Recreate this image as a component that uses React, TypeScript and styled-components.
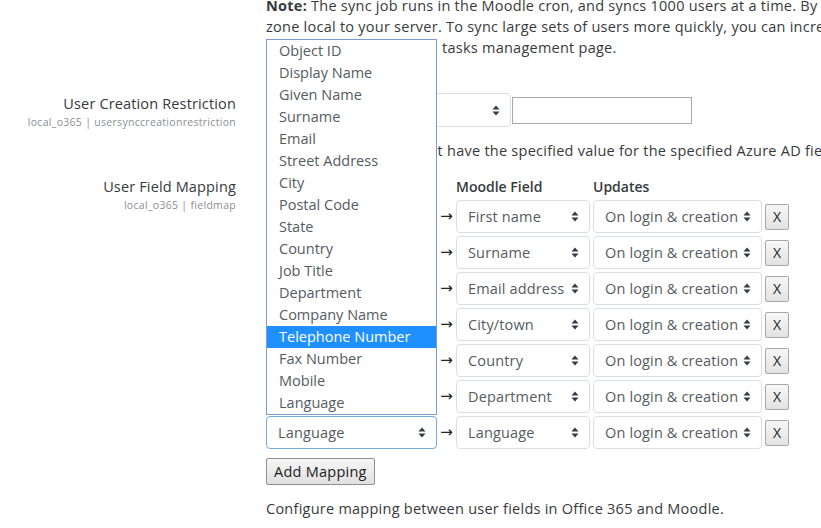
import React from "react";
import styled, { createGlobalStyle } from "styled-components";

const Global = createGlobalStyle`
  html, body { margin: 0; padding: 0; background: #fff; overflow: hidden; }
  body { font-family: "Open Sans", "Liberation Sans", sans-serif; color: #373a3c; }
`;

const Page = styled.div`
  margin-top: -5px;
  width: 821px;
  display: flex;
  flex-direction: column;
`;

const Setting = styled.div<{ $mt?: number }>`
  display: grid;
  grid-template-columns: 236px 1fr;
  column-gap: 30px;
  margin-top: ${(p) => p.$mt ?? 0}px;
`;

const LabelCol = styled.div`
  text-align: right;
  display: flex;
  flex-direction: column;
  padding-top: 1px;
`;

const Label = styled.div`
  font-size: 14.5px;
  line-height: 20px;
  letter-spacing: 0.15px;
  color: #373a3c;
  white-space: nowrap;
`;

const Sub = styled.div`
  font-size: 10.5px;
  line-height: 16px;
  letter-spacing: 0.3px;
  color: #8a8f94;
  white-space: nowrap;
`;

const Content = styled.div`
  min-width: 0;
  display: flex;
  flex-direction: column;
  align-items: flex-start;
`;

const Text = styled.div<{ $mt?: number }>`
  font-size: 14.5px;
  line-height: 21px;
  letter-spacing: 0.25px;
  white-space: nowrap;
  color: #373a3c;
  margin-top: ${(p) => p.$mt ?? 0}px;
`;

const Lead = styled.span<{ $w: number }>`
  display: inline-flex;
  justify-content: flex-end;
  overflow: hidden;
  width: ${(p) => p.$w}px;
  vertical-align: bottom;
  white-space: nowrap;
`;

const Inline = styled.div`
  display: flex;
  align-items: center;
  gap: 1px;
`;

const SelectBox = styled.div<{ $w: number; $h: number; $focus?: boolean }>`
  box-sizing: border-box;
  width: ${(p) => p.$w}px;
  height: ${(p) => p.$h}px;
  display: flex;
  align-items: center;
  justify-content: space-between;
  padding: 0 10px 0 11px;
  border: 1px solid ${(p) => (p.$focus ? "#74ade3" : "#dcdfe2")};
  border-radius: 4px;
  background: #fff;
  font-size: 14.5px;
  letter-spacing: 0.15px;
  color: #555b61;
  white-space: nowrap;
`;

const TextInput = styled.div`
  box-sizing: border-box;
  width: 180px;
  height: 27px;
  border: 1px solid #a9a9a9;
  background: #fff;
`;

const Table = styled.div`
  display: grid;
  grid-template-columns: 171px 13px 134px 169px 24px;
  column-gap: 3px;
  row-gap: 3px;
  align-items: center;
`;

const Head = styled.div`
  font-size: 14px;
  font-weight: 600;
  line-height: 21px;
  height: 21px;
  color: #373a3c;
  white-space: nowrap;
`;

const Arrow = styled.div`
  font-size: 15px;
  color: #222;
  text-align: center;
  font-family: "DejaVu Sans", sans-serif;
  line-height: 1;
`;

const Anchor = styled.div`
  position: relative;
`;

const Dropdown = styled.ul`
  position: absolute;
  left: 0;
  right: 0;
  bottom: calc(100% + 1px);
  margin: 0;
  padding: 0;
  list-style: none;
  background: #fff;
  border: 1px solid #7b9bd2;
  z-index: 5;
`;

const Option = styled.li<{ $sel?: boolean }>`
  height: 22px;
  line-height: 22px;
  padding: 0 12px;
  font-size: 14.5px;
  color: ${(p) => (p.$sel ? "#fff" : "#555b61")};
  background: ${(p) => (p.$sel ? "#1e90ff" : "transparent")};
  white-space: nowrap;
`;

const XButton = styled.button`
  box-sizing: border-box;
  width: 24px;
  height: 26px;
  padding: 0;
  border: 1px solid #a7a7a7;
  border-radius: 2px;
  background: linear-gradient(#f7f7f7, #e2e2e2);
  font-family: inherit;
  font-size: 14px;
  color: #222;
`;

const AddButton = styled.button`
  box-sizing: border-box;
  margin-top: 9px;
  height: 27px;
  padding: 0 7px;
  border: 1px solid #8f8f8f;
  border-radius: 2px;
  background: linear-gradient(#f6f6f6, #e0e0e0);
  font-family: inherit;
  font-size: 14.5px;
  letter-spacing: 0.25px;
  color: #222;
`;

const Spin = () => (
  <svg width="8" height="11" viewBox="0 0 8 11">
    <path d="M4 0.5 L7.5 4.5 H0.5Z M0.5 6.5 H7.5 L4 10.5Z" fill="#343a40" />
  </svg>
);

const Select = ({ w, h, value, focus }: { w: number; h: number; value: string; focus?: boolean }) => (
  <SelectBox $w={w} $h={h} $focus={focus}>
    <span>{value}</span>
    <Spin />
  </SelectBox>
);

const remoteOptions = [
  "Object ID",
  "Display Name",
  "Given Name",
  "Surname",
  "Email",
  "Street Address",
  "City",
  "Postal Code",
  "State",
  "Country",
  "Job Title",
  "Department",
  "Company Name",
  "Telephone Number",
  "Fax Number",
  "Mobile",
  "Language",
];

const rows = [
  ["Given Name", "First name"],
  ["Surname", "Surname"],
  ["Email", "Email address"],
  ["City", "City/town"],
  ["Country", "Country"],
  ["Department", "Department"],
  ["Language", "Language"],
];

export default function App() {
  return (
    <Page>
      <Global />
      <Setting>
        <LabelCol />
        <Content>
          <Text>
            <b>Note:</b> The sync job runs in the Moodle cron, and syncs 1000 users at a time. By default, it runs daily
          </Text>
          <Text>zone local to your server. To sync large sets of users more quickly, you can increase</Text>
          <Text>
            <Lead $w={172}>
              <span>task using the Scheduled</span>
            </Lead>{" "}
            tasks management page.
          </Text>
        </Content>
      </Setting>

      <Setting $mt={35}>
        <LabelCol>
          <Label>User Creation Restriction</Label>
          <Sub>local_o365 | usersynccreationrestriction</Sub>
        </LabelCol>
        <Content>
          <Inline>
            <Select w={245} h={34} value="" />
            <TextInput />
          </Inline>
          <Text $mt={13}>
            <Lead $w={177}>
              <span>Restrict user creation to users that</span>
            </Lead>{" "}
            have the specified value for the specified Azure AD field.
          </Text>
        </Content>
      </Setting>

      <Setting $mt={15}>
        <LabelCol>
          <Label>User Field Mapping</Label>
          <Sub>local_o365 | fieldmap</Sub>
        </LabelCol>
        <Content>
          <Table>
            <Head>Remote Field</Head>
            <div />
            <Head>Moodle Field</Head>
            <Head>Updates</Head>
            <div />
            {rows.map(([remote, moodle], i) => {
              const last = i === rows.length - 1;
              return (
                <React.Fragment key={i}>
                  <Anchor>
                    <Select w={171} h={33} value={remote} focus={last} />
                    {last && (
                      <Dropdown>
                        {remoteOptions.map((o) => (
                          <Option key={o} $sel={o === "Telephone Number"}>
                            {o}
                          </Option>
                        ))}
                      </Dropdown>
                    )}
                  </Anchor>
                  <Arrow>→</Arrow>
                  <Select w={134} h={33} value={moodle} />
                  <Select w={169} h={33} value="On login & creation" />
                  <XButton>X</XButton>
                </React.Fragment>
              );
            })}
          </Table>
          <AddButton>Add Mapping</AddButton>
          <Text $mt={13}>Configure mapping between user fields in Office 365 and Moodle.</Text>
        </Content>
      </Setting>
    </Page>
  );
}
